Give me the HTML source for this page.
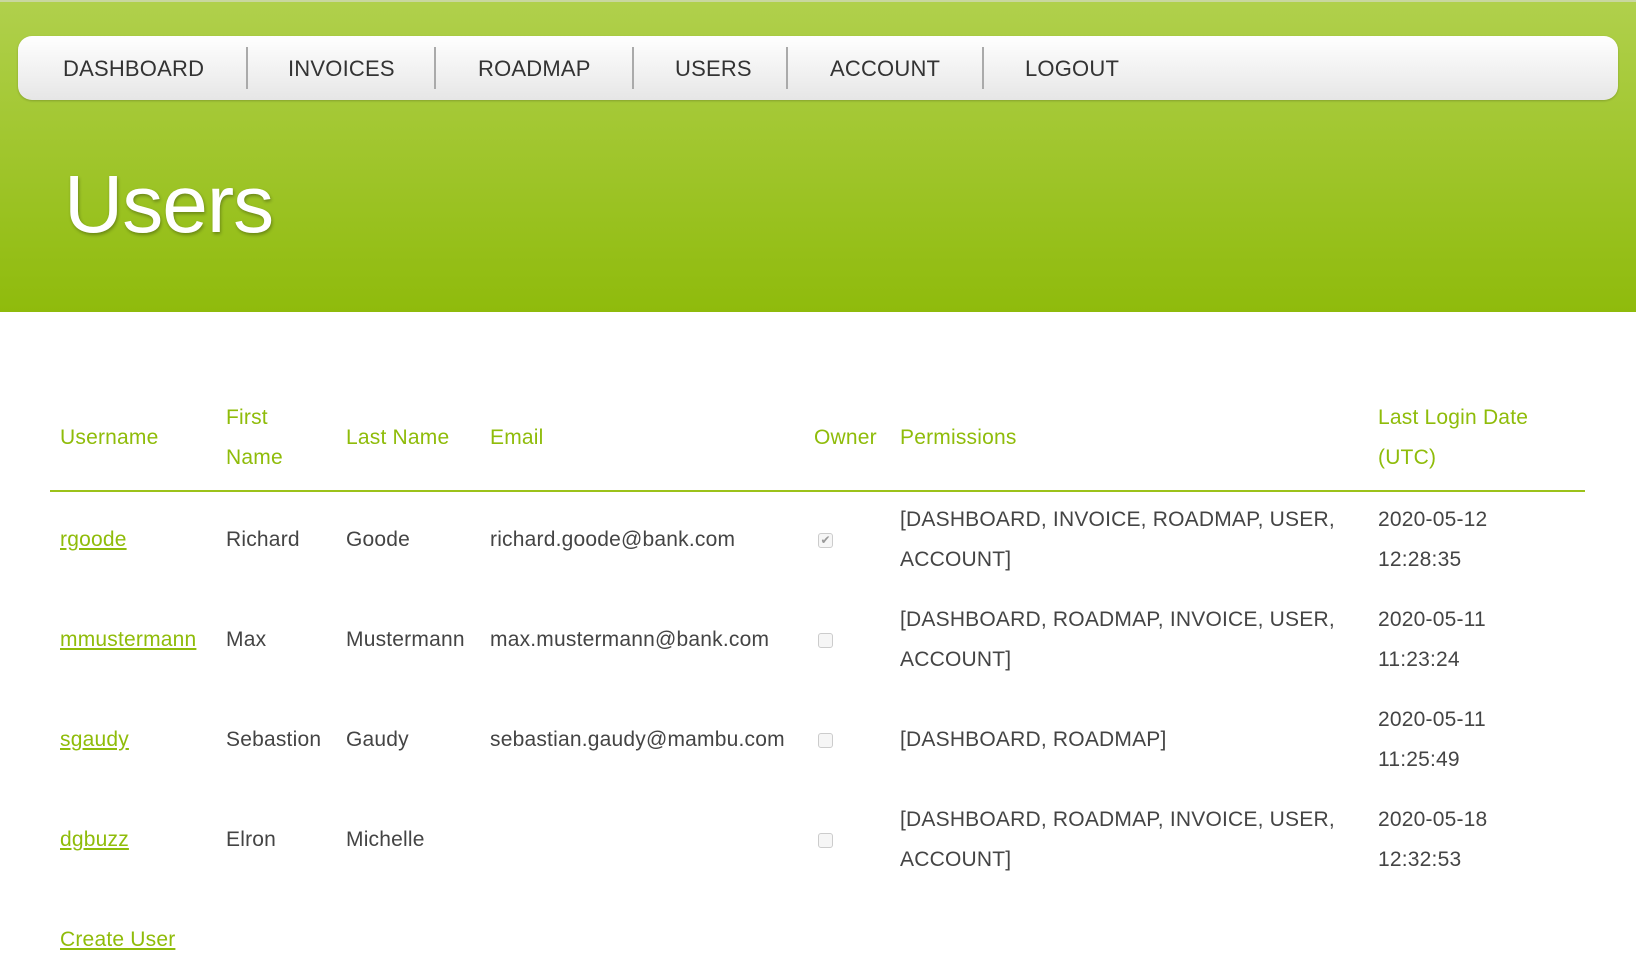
<!DOCTYPE html>
<html><head><style>
body{margin:0;width:1636px;height:970px;overflow:hidden;background:#fff;font-family:"Liberation Sans",sans-serif;}
.hdr{position:absolute;left:0;top:0;width:1636px;height:312px;background:linear-gradient(#b0d04c,#8fbb0c);border-top:2px solid #c9d7a0;box-sizing:border-box}
.nav{position:absolute;left:18px;top:34px;width:1600px;height:64px;border-radius:14px;background:linear-gradient(#fff,#e6e6e6);box-shadow:0 1px 2px rgba(0,0,0,.2)}
.nav span{position:absolute;top:20px;font-size:22px;color:#333;letter-spacing:.2px}
.sep{position:absolute;top:11px;width:2px;height:42px;background:#aaa}
h1{position:absolute;left:64px;top:156px;margin:0;font-size:82px;font-weight:normal;color:#fff;text-shadow:1px 2px 3px rgba(0,0,0,.3);letter-spacing:-1px}
.t{position:absolute;font-size:21px;color:#444;line-height:40px;white-space:nowrap;letter-spacing:.2px}
.g{color:#8fbc0a}
a{color:#8fbc0a;text-decoration:underline}
.line{position:absolute;left:50px;top:490px;width:1535px;height:2px;background:#9cc21a}
.cb{position:absolute;left:818px;width:15px;height:15px;border:1px solid #ccc;border-radius:3px;background:#f6f6f6;box-sizing:border-box;font-size:12px;color:#999;line-height:13px;text-align:center}
</style></head><body>
<div class="hdr">
<div class="nav">
<span style="left:45px">DASHBOARD</span><div class="sep" style="left:228px"></div>
<span style="left:270px">INVOICES</span><div class="sep" style="left:416px"></div>
<span style="left:460px">ROADMAP</span><div class="sep" style="left:614px"></div>
<span style="left:657px">USERS</span><div class="sep" style="left:768px"></div>
<span style="left:812px">ACCOUNT</span><div class="sep" style="left:964px"></div>
<span style="left:1007px">LOGOUT</span>
</div>
<h1>Users</h1>
</div>
<div class="t g" style="left:60px;top:418px">Username</div>
<div class="t g" style="left:226px;top:398px">First<br>Name</div>
<div class="t g" style="left:346px;top:418px">Last Name</div>
<div class="t g" style="left:490px;top:418px">Email</div>
<div class="t g" style="left:814px;top:418px">Owner</div>
<div class="t g" style="left:900px;top:418px">Permissions</div>
<div class="t g" style="left:1378px;top:398px">Last Login Date<br>(UTC)</div>
<div class="line"></div>

<div class="t" style="left:60px;top:520px"><a>rgoode</a></div>
<div class="t" style="left:226px;top:520px">Richard</div>
<div class="t" style="left:346px;top:520px">Goode</div>
<div class="t" style="left:490px;top:520px">richard.goode@bank.com</div>
<div class="cb" style="top:533px">✔</div>
<div class="t" style="left:900px;top:500px">[DASHBOARD, INVOICE, ROADMAP, USER,<br>ACCOUNT]</div>
<div class="t" style="left:1378px;top:500px">2020-05-12<br>12:28:35</div>

<div class="t" style="left:60px;top:620px"><a>mmustermann</a></div>
<div class="t" style="left:226px;top:620px">Max</div>
<div class="t" style="left:346px;top:620px">Mustermann</div>
<div class="t" style="left:490px;top:620px">max.mustermann@bank.com</div>
<div class="cb" style="top:633px"></div>
<div class="t" style="left:900px;top:600px">[DASHBOARD, ROADMAP, INVOICE, USER,<br>ACCOUNT]</div>
<div class="t" style="left:1378px;top:600px">2020-05-11<br>11:23:24</div>

<div class="t" style="left:60px;top:720px"><a>sgaudy</a></div>
<div class="t" style="left:226px;top:720px">Sebastion</div>
<div class="t" style="left:346px;top:720px">Gaudy</div>
<div class="t" style="left:490px;top:720px">sebastian.gaudy@mambu.com</div>
<div class="cb" style="top:733px"></div>
<div class="t" style="left:900px;top:720px">[DASHBOARD, ROADMAP]</div>
<div class="t" style="left:1378px;top:700px">2020-05-11<br>11:25:49</div>

<div class="t" style="left:60px;top:820px"><a>dgbuzz</a></div>
<div class="t" style="left:226px;top:820px">Elron</div>
<div class="t" style="left:346px;top:820px">Michelle</div>
<div class="cb" style="top:833px"></div>
<div class="t" style="left:900px;top:800px">[DASHBOARD, ROADMAP, INVOICE, USER,<br>ACCOUNT]</div>
<div class="t" style="left:1378px;top:800px">2020-05-18<br>12:32:53</div>

<div class="t" style="left:60px;top:920px"><a>Create User</a></div>
</body></html>
